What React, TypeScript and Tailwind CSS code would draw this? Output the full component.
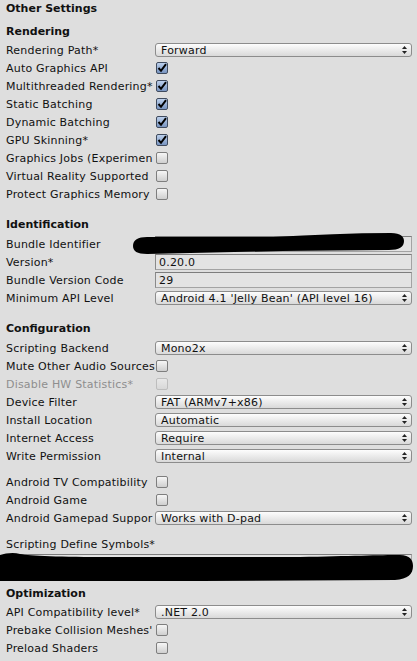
import React from 'react';

// Unity "Other Settings" inspector panel (light skin)

type Control =
	| { kind: 'dropdown'; value: string }
	| { kind: 'check'; checked: boolean; disabled?: boolean }
	| { kind: 'text'; value: string };

interface RowData {
	label: string;
	control: Control;
	disabled?: boolean;
}

const font = { fontFamily: '"DejaVu Sans", Verdana, sans-serif' };

function Arrows() {
	return (
		<svg width="5" height="8" viewBox="0 0 5 8" className="shrink-0">
			<path d="M2.5 0 L5 3 L0 3 Z" fill="#222" />
			<path d="M0 5 L5 5 L2.5 8 Z" fill="#222" />
		</svg>
	);
}

function Dropdown({ value }: { value: string }) {
	return (
		<div className="flex h-[14px] flex-1 items-center justify-between rounded-[3px] border border-[#8c8c8c] bg-linear-to-b from-[#fdfdfd] to-[#d9d9d9] pl-[5px] pr-[4px]">
			<span className="text-[11px] leading-none tracking-[0.2px] text-[#111]">{value}</span>
			<Arrows />
		</div>
	);
}

function Checkbox({ checked, disabled }: { checked: boolean; disabled?: boolean }) {
	if (checked) {
		return (
			<div className="ml-[1px] flex h-[12px] w-[12px] items-center justify-center rounded-[2px] border border-[#3f4b5e] bg-linear-to-b from-[#bcd0ec] to-[#7894c0]">
				<svg width="10" height="10" viewBox="0 0 10 10">
					<path d="M1.5 5 L4 7.8 L9 1.2" fill="none" stroke="#000" strokeWidth="2" />
				</svg>
			</div>
		);
	}
	return (
		<div
			className={
				disabled
					? 'ml-[1px] h-[12px] w-[12px] rounded-[2px] border border-[#bdbdbd] bg-linear-to-b from-[#e8e8e8] to-[#d8d8d8]'
					: 'ml-[1px] h-[12px] w-[12px] rounded-[2px] border border-[#7e7e7e] bg-linear-to-b from-[#f6f6f6] to-[#cfcfcf]'
			}
		/>
	);
}

function TextField({ value }: { value: string }) {
	return (
		<div className="flex h-[16px] flex-1 items-center border border-[#a3a3a3] border-t-[#7d7d7d] border-l-[#8a8a8a] bg-[#e3e3e3] px-[3px] text-[11px] leading-none tracking-[0.2px] text-[#111]">
			{value}
		</div>
	);
}

function Row({ label, control, disabled }: RowData) {
	return (
		<div className="flex h-[18px] items-center pr-[5px]">
			<div
				className={
					'w-[155px] shrink-0 overflow-hidden whitespace-nowrap pl-[6px] text-[11px] leading-none tracking-[0.2px] ' +
					(disabled ? 'text-[#8e8e8e]' : 'text-[#111]')
				}
			>
				{label}
			</div>
			<div className="flex flex-1 items-center">
				{control.kind === 'dropdown' && <Dropdown value={control.value} />}
				{control.kind === 'check' && <Checkbox checked={control.checked} disabled={control.disabled} />}
				{control.kind === 'text' && <TextField value={control.value} />}
			</div>
		</div>
	);
}

function Header({ title, className }: { title: string; className: string }) {
	return (
		<div className={'flex h-[20px] items-center pl-[6px] text-[11px] font-bold leading-none text-[#111] ' + className}>
			{title}
		</div>
	);
}

const rendering: RowData[] = [
	{ label: 'Rendering Path*', control: { kind: 'dropdown', value: 'Forward' } },
	{ label: 'Auto Graphics API', control: { kind: 'check', checked: true } },
	{ label: 'Multithreaded Rendering*', control: { kind: 'check', checked: true } },
	{ label: 'Static Batching', control: { kind: 'check', checked: true } },
	{ label: 'Dynamic Batching', control: { kind: 'check', checked: true } },
	{ label: 'GPU Skinning*', control: { kind: 'check', checked: true } },
	{ label: 'Graphics Jobs (Experimen', control: { kind: 'check', checked: false } },
	{ label: 'Virtual Reality Supported', control: { kind: 'check', checked: false } },
	{ label: 'Protect Graphics Memory', control: { kind: 'check', checked: false } },
];

const identification: RowData[] = [
	{ label: 'Bundle Identifier', control: { kind: 'text', value: '' } },
	{ label: 'Version*', control: { kind: 'text', value: '0.20.0' } },
	{ label: 'Bundle Version Code', control: { kind: 'text', value: '29' } },
	{ label: 'Minimum API Level', control: { kind: 'dropdown', value: "Android 4.1 'Jelly Bean' (API level 16)" } },
];

const configuration: RowData[] = [
	{ label: 'Scripting Backend', control: { kind: 'dropdown', value: 'Mono2x' } },
	{ label: 'Mute Other Audio Sources', control: { kind: 'check', checked: false } },
	{ label: 'Disable HW Statistics*', control: { kind: 'check', checked: false, disabled: true }, disabled: true },
	{ label: 'Device Filter', control: { kind: 'dropdown', value: 'FAT (ARMv7+x86)' } },
	{ label: 'Install Location', control: { kind: 'dropdown', value: 'Automatic' } },
	{ label: 'Internet Access', control: { kind: 'dropdown', value: 'Require' } },
	{ label: 'Write Permission', control: { kind: 'dropdown', value: 'Internal' } },
];

const android: RowData[] = [
	{ label: 'Android TV Compatibility', control: { kind: 'check', checked: false } },
	{ label: 'Android Game', control: { kind: 'check', checked: false } },
	{ label: 'Android Gamepad Suppor', control: { kind: 'dropdown', value: 'Works with D-pad' } },
];

const optimization: RowData[] = [
	{ label: 'API Compatibility level*', control: { kind: 'dropdown', value: '.NET 2.0' } },
	{ label: "Prebake Collision Meshes'", control: { kind: 'check', checked: false } },
	{ label: 'Preload Shaders', control: { kind: 'check', checked: false } },
];

export default function App() {
	return (
		<div className="relative min-h-[661px] w-full overflow-hidden bg-[#dedede] pt-[1px]" style={font}>
			{/* Title */}
			<div className="flex h-[14px] items-center pl-[6px] text-[11px] font-bold leading-none text-[#111]">
				Other Settings
			</div>

			<Header title="Rendering" className="mt-[6px]" />
			{rendering.map(r => <Row key={r.label} {...r} />)}

			<Header title="Identification" className="mt-[11px]" />
			<div className="mt-[1px]">
				{identification.map(r => <Row key={r.label} {...r} />)}
			</div>

			<Header title="Configuration" className="mt-[11px]" />
			<div className="mt-[1px]">
				{configuration.map(r => <Row key={r.label} {...r} />)}
			</div>

			<div className="mt-[8px]">
				{android.map(r => <Row key={r.label} {...r} />)}
			</div>

			{/* Scripting define symbols */}
			<div className="mt-[8px] flex h-[18px] items-center pl-[6px] text-[11px] leading-none tracking-[0.2px] text-[#111]">
				Scripting Define Symbols*
			</div>
			<div className="mt-[1px] flex pl-[6px] pr-[5px]">
				<div className="h-[18px] flex-1 border border-[#a3a3a3] border-t-[#7d7d7d] bg-[#e3e3e3]" />
			</div>

			<Header title="Optimization" className="mt-[11px]" />
			{optimization.map(r => <Row key={r.label} {...r} />)}

			{/* redaction marks */}
			<svg className="absolute left-[133px] top-[232px]" width="272" height="23" viewBox="0 0 272 23">
				<path
					d="M0 14 C0 8 5 5 14 5 L140 5 C180 3 220 1 258 1 C268 1 271 5 271 9 C271 15 266 18 256 18 L150 19 L14 22 C4 22 0 19 0 14 Z"
					fill="#000"
				/>
			</svg>
			<svg className="absolute left-0 top-[552px]" width="414" height="30" viewBox="0 0 414 30">
				<path
					d="M0 3 C6 1 14 0 20 2 C30 4 60 5 110 5 L300 5 C350 4 380 3 400 3 C410 3 413 8 413 14 C413 22 408 27 395 28 L200 29 L0 29 Z"
					fill="#000"
				/>
			</svg>
		</div>
	);
}
